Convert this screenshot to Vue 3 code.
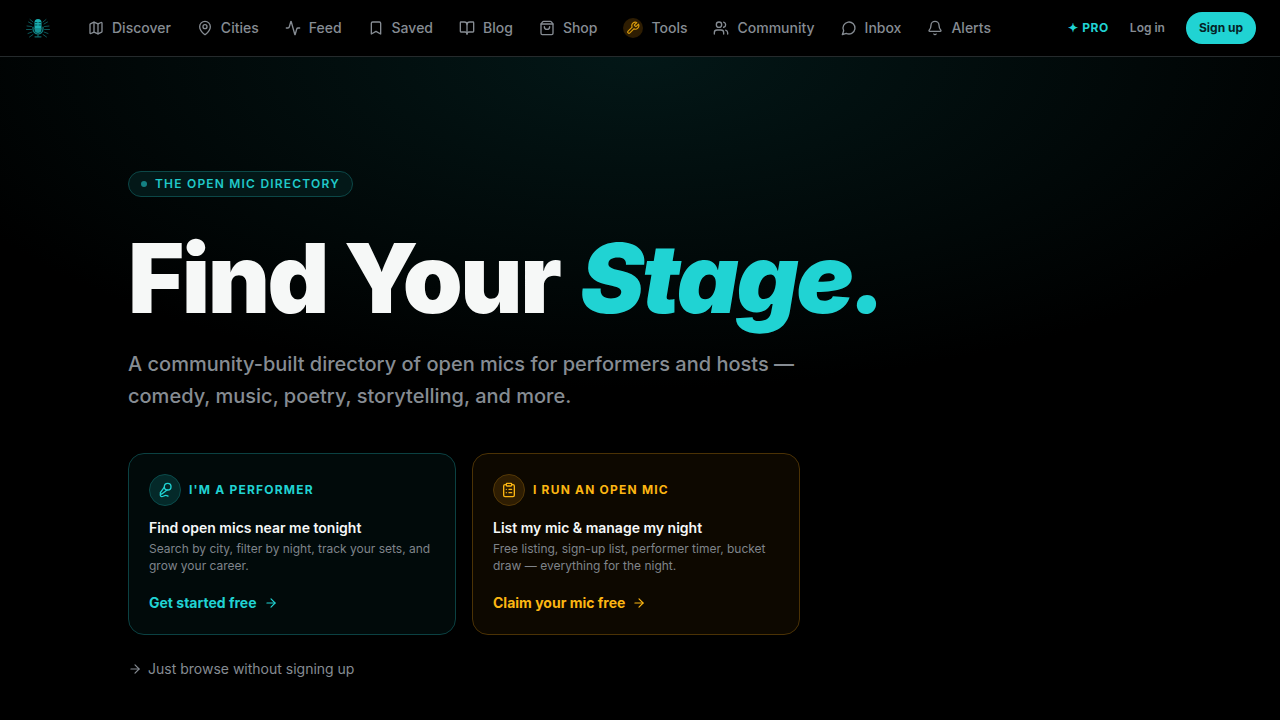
<template>
  <div class="page">
    <header class="topbar">
      <a href="#" class="logo" aria-label="Home">
        <svg viewBox="0 0 28 28" width="28" height="28" fill="none" stroke-linecap="round">
          <g stroke="#0d5658" stroke-width="1">
            <path d="M8 10 4.500 8M7.500 12.500 3 12M7.500 15.500H2.500M8 18l-4 1.500M9 20.500 5.500 23M9 8 6 5.500" />
            <path d="m20 10 3.500-2M20.500 12.500l4.500-.5M20.500 15.500h5M20 18l4 1.500M19 20.500l3.500 2.500M19 8l3-2.500" />
          </g>
          <rect x="10.500" y="5" width="7" height="12" rx="3.500" fill="#19aeb0" />
          <path d="M11 8.500h2M15 8.500h2M11 11h2M15 11h2" stroke="#075052" stroke-width="1" />
          <path d="M9 13v2a5 5 0 0 0 10 0v-2" stroke="#128183" stroke-width="1.200" />
          <path d="M10.500 14h7v1.500a3.500 3.500 0 0 1-7 0z" fill="#139092" />
          <path d="M14 20v2.500M11 22.800h6" stroke="#0e6466" stroke-width="1.200" />
        </svg>
      </a>

      <nav class="nav">
        <a v-for="item in navItems" :key="item.label" href="#" class="nav-link">
          <span :class="{ 'tool-badge': item.badge }" class="nav-icon">
            <svg class="icon" viewBox="0 0 24 24"><path v-for="d in icons[item.icon]" :key="d" :d="d" /></svg>
          </span>
          {{ item.label }}
        </a>
      </nav>

      <div class="account">
        <a href="#" class="pro">✦ PRO</a>
        <a href="#" class="login">Log in</a>
        <button type="button" class="signup">Sign up</button>
      </div>
    </header>

    <main class="hero">
      <div class="hero-inner">
        <p class="eyebrow"><span class="dot"></span>The open mic directory</p>
        <h1>Find Your <em>Stage.</em></h1>
        <p class="lead">
          A community-built directory of open mics for performers and hosts — comedy, music, poetry, storytelling, and more.
        </p>

        <!-- Performer / host entry points -->
        <div class="cards">
          <a v-for="card in cards" :key="card.role" href="#" class="card" :class="card.theme">
            <div class="card-head">
              <span class="card-icon">
                <svg class="icon" viewBox="0 0 24 24"><path v-for="d in icons[card.icon]" :key="d" :d="d" /></svg>
              </span>
              <span class="role">{{ card.role }}</span>
            </div>
            <h2>{{ card.title }}</h2>
            <p class="desc">{{ card.text }}</p>
            <span class="cta">
              {{ card.cta }}
              <svg class="icon small" viewBox="0 0 24 24"><path v-for="d in icons.arrow" :key="d" :d="d" /></svg>
            </span>
          </a>
        </div>

        <a href="#" class="browse">
          <svg class="icon small" viewBox="0 0 24 24"><path v-for="d in icons.arrow" :key="d" :d="d" /></svg>
          Just browse without signing up
        </a>
      </div>
    </main>
  </div>
</template>

<script setup>
const icons = {
  map: [
    'M14.106 5.553a2 2 0 0 0 1.788 0l3.659-1.830A1 1 0 0 1 21 4.619v12.764a1 1 0 0 1-.553.894l-4.553 2.277a2 2 0 0 1-1.788 0l-4.212-2.106a2 2 0 0 0-1.788 0l-3.659 1.830A1 1 0 0 1 3 19.381V6.618a1 1 0 0 1 .553-.894l4.553-2.277a2 2 0 0 1 1.788 0z',
    'M15 5.764v15',
    'M9 3.236v15'
  ],
  pin: [
    'M20 10c0 4.993-5.539 10.193-7.399 11.799a1 1 0 0 1-1.202 0C9.539 20.193 4 14.993 4 10a8 8 0 0 1 16 0',
    'M15 10a3 3 0 1 1-6 0 3 3 0 0 1 6 0'
  ],
  activity: ['M22 12h-2.480a2 2 0 0 0-1.930 1.460l-2.350 8.360a.25.25 0 0 1-.48 0L9.240 2.180a.25.25 0 0 0-.48 0l-2.350 8.360A2 2 0 0 1 4.490 12H2'],
  bookmark: ['m19 21-7-4-7 4V5a2 2 0 0 1 2-2h10a2 2 0 0 1 2 2v16z'],
  book: [
    'M12 7v14',
    'M3 18a1 1 0 0 1-1-1V4a1 1 0 0 1 1-1h5a4 4 0 0 1 4 4 4 4 0 0 1 4-4h5a1 1 0 0 1 1 1v13a1 1 0 0 1-1 1h-6a3 3 0 0 0-3 3 3 3 0 0 0-3-3z'
  ],
  bag: [
    'M16 10a4 4 0 0 1-8 0',
    'M3.103 6.034h17.794',
    'M3.400 5.467a2 2 0 0 0-.4 1.200V20a2 2 0 0 0 2 2h14a2 2 0 0 0 2-2V6.667a2 2 0 0 0-.4-1.200l-2-2.667A2 2 0 0 0 17 2H7a2 2 0 0 0-1.600.8z'
  ],
  wrench: ['M14.700 6.300a1 1 0 0 0 0 1.400l1.600 1.600a1 1 0 0 0 1.400 0l3.770-3.770a6 6 0 0 1-7.940 7.940l-6.910 6.910a2.120 2.120 0 0 1-3-3l6.910-6.910a6 6 0 0 1 7.940-7.940l-3.760 3.760z'],
  users: [
    'M16 21v-2a4 4 0 0 0-4-4H6a4 4 0 0 0-4 4v2',
    'M13 7a4 4 0 1 1-8 0 4 4 0 0 1 8 0',
    'M16 3.128a4 4 0 0 1 0 7.744',
    'M22 21v-2a4 4 0 0 0-3-3.870'
  ],
  message: ['M7.900 20A9 9 0 1 0 4 16.100L2 22Z'],
  bell: [
    'M10.268 21a2 2 0 0 0 3.464 0',
    'M3.262 15.326A1 1 0 0 0 4 17h16a1 1 0 0 0 .740-1.673C19.410 13.956 18 12.499 18 8A6 6 0 0 0 6 8c0 4.499-1.411 5.956-2.738 7.326'
  ],
  mic: [
    'm11 7.601-5.994 8.190a1 1 0 0 0 .1 1.298l.817.818a1 1 0 0 0 1.314.087L15.090 12',
    'M16.500 21.174C15.500 20.500 14.372 20 13 20c-2.058 0-3.928 2.356-6 2-2.072-.356-2.775-3.369-1.500-4.500',
    'M21 7a5 5 0 1 1-10 0 5 5 0 0 1 10 0'
  ],
  clipboard: [
    'M9 2h6a1 1 0 0 1 1 1v2a1 1 0 0 1-1 1H9a1 1 0 0 1-1-1V3a1 1 0 0 1 1-1z',
    'M16 4h2a2 2 0 0 1 2 2v14a2 2 0 0 1-2 2H6a2 2 0 0 1-2-2V6a2 2 0 0 1 2-2h2',
    'M12 11h4',
    'M12 16h4',
    'M8 11h.01',
    'M8 16h.01'
  ],
  arrow: ['M5 12h14', 'm12 5 7 7-7 7']
}

const navItems = [
  { label: 'Discover', icon: 'map' },
  { label: 'Cities', icon: 'pin' },
  { label: 'Feed', icon: 'activity' },
  { label: 'Saved', icon: 'bookmark' },
  { label: 'Blog', icon: 'book' },
  { label: 'Shop', icon: 'bag' },
  { label: 'Tools', icon: 'wrench', badge: true },
  { label: 'Community', icon: 'users' },
  { label: 'Inbox', icon: 'message' },
  { label: 'Alerts', icon: 'bell' }
]

const cards = [
  {
    theme: 'teal',
    icon: 'mic',
    role: "I'm a performer",
    title: 'Find open mics near me tonight',
    text: 'Search by city, filter by night, track your sets, and grow your career.',
    cta: 'Get started free'
  },
  {
    theme: 'amber',
    icon: 'clipboard',
    role: 'I run an open mic',
    title: 'List my mic & manage my night',
    text: 'Free listing, sign-up list, performer timer, bucket draw — everything for the night.',
    cta: 'Claim your mic free'
  }
]
</script>

<style>
body { background: #000; }
</style>

<style scoped>
.page { min-height: 100vh; display: flex; flex-direction: column; background: #000; color: #f5f8f8; font-family: Inter, "Liberation Sans", sans-serif; box-sizing: border-box; }
.page * { box-sizing: border-box; }
a { color: inherit; text-decoration: none; }
h1, h2, p { margin: 0; }
.icon { display: block; width: 16px; height: 16px; flex: none; fill: none; stroke: currentColor; stroke-width: 2; stroke-linecap: round; stroke-linejoin: round; }
.icon.small { width: 14px; height: 14px; }

.topbar { height: 57px; display: flex; align-items: center; padding: 0 24px; border-bottom: 1px solid #252a2c; }
.logo { display: flex; margin-right: 36px; }
.nav { display: flex; align-items: center; gap: 26px; }
.nav-link { display: flex; align-items: center; gap: 8px; font-size: 14px; line-height: 20px; font-weight: 500; color: #868c93; white-space: nowrap; }
.nav-icon { display: flex; align-items: center; justify-content: center; }
.tool-badge { width: 20px; height: 20px; border-radius: 50%; background: #2e1d02; color: #d99c0c; }
.tool-badge .icon { width: 14px; height: 14px; }
.account { display: flex; align-items: center; gap: 21px; margin-left: auto; font-size: 12px; line-height: 16px; white-space: nowrap; }
.pro { font-weight: 700; letter-spacing: 0.05em; color: #20d3d3; }
.login { font-weight: 600; color: #868c93; }
.signup { height: 32px; padding: 0 13px; border: 0; border-radius: 16px; background: #20d3d3; color: #052326; font: inherit; font-weight: 700; cursor: pointer; }

.hero { flex: 1; padding: 114px 128px 40px; background: radial-gradient(ellipse 60% 50% at 50% 0, #031717, #000); }
.hero-inner { max-width: 1024px; }
.eyebrow { display: inline-flex; align-items: center; gap: 8px; height: 26px; padding: 0 12px; border: 1px solid #0c4747; border-radius: 13px; background: #031818; color: #20c9c9; font-size: 12px; line-height: 16px; font-weight: 600; letter-spacing: 0.1em; text-transform: uppercase; vertical-align: top; }
.dot { width: 6px; height: 6px; border-radius: 50%; background: #148082; }
h1 { margin-top: 32px; font-size: 96px; line-height: 98px; font-weight: 900; letter-spacing: -0.025em; color: #f6f8f7; }
h1 em { margin-left: 4px; font-style: oblique 20deg; color: #20d3d3; }
.lead { margin-top: 21px; max-width: 672px; font-size: 20px; line-height: 32px; font-weight: 500; color: #868c93; }

.cards { display: grid; grid-template-columns: 1fr 1fr; gap: 16px; max-width: 672px; margin-top: 41px; }
.card { padding: 20px; border: 1px solid; border-radius: 16px; }
.card.teal { background: #010a0a; border-color: #0b4142; }
.card.amber { background: #0d0800; border-color: #4b3205; }
.card-head { display: flex; align-items: center; gap: 8px; margin-bottom: 12px; }
.card-icon { display: flex; align-items: center; justify-content: center; width: 32px; height: 32px; border: 1px solid; border-radius: 50%; }
.teal .card-icon { background: #042929; border-color: #0b4b4b; }
.amber .card-icon { background: #2e1d02; border-color: #543806; }
.role { font-size: 12px; line-height: 16px; font-weight: 700; letter-spacing: 0.1em; text-transform: uppercase; }
.teal .role, .teal .cta, .teal .card-icon { color: #20d3d3; }
.amber .role, .amber .cta, .amber .card-icon { color: #fcb612; }
h2 { font-size: 14px; line-height: 20px; font-weight: 600; }
.desc { margin-top: 2px; font-size: 12px; line-height: 17px; color: #7f848a; }
.cta { display: flex; align-items: center; gap: 7px; margin: 19px 0 1px; font-size: 14px; line-height: 20px; font-weight: 700; }
.browse { display: flex; align-items: center; gap: 6px; width: fit-content; margin-top: 24px; font-size: 14px; line-height: 20px; color: #868c93; }
</style>
